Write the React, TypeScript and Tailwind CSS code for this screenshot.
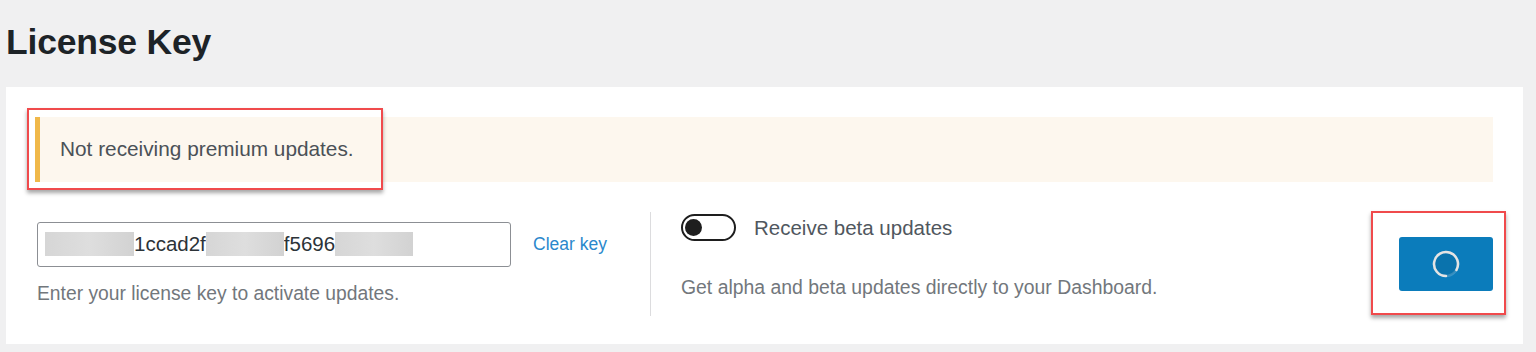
import React from "react";

const font = { fontFamily: '"Liberation Sans", Arial, sans-serif' };

function Redacted({ width }: { width: number }) {
  return (
    <span
      className="inline-block h-[24px] shrink-0 bg-gradient-to-r from-[#d6d6d6] via-[#dedede] to-[#d2d2d2] blur-[0.6px]"
      style={{ width }}
    />
  );
}

function Spinner() {
  return (
    <svg width="28" height="28" viewBox="0 0 28 28" fill="none">
      <circle cx="14" cy="14" r="12" fill="rgba(0,0,0,0.07)" />
      <circle cx="14" cy="14" r="12" stroke="rgba(255,255,255,0.18)" strokeWidth="2.5" />
      <path
        d="M14 26 A12 12 0 1 1 24.39 20"
        stroke="#e4e4e4"
        strokeWidth="2.5"
        strokeLinecap="round"
      />
    </svg>
  );
}

function Toggle() {
  return (
    <span className="flex h-[27px] w-[55px] shrink-0 items-center rounded-full border-2 border-[#1e1e1e] bg-white pl-[2px]">
      <span className="h-[17px] w-[17px] rounded-full bg-[#1e1e1e]" />
    </span>
  );
}

export default function App() {
  return (
    <div
      className="relative h-[352px] w-full overflow-hidden bg-[#f0f0f1] pl-[6px] pr-[13px]"
      style={font}
    >
      <h1 className="pt-[25px] text-[35.5px] font-bold leading-none tracking-[-0.2px] text-[#1d2327]">
        License Key
      </h1>

      <div className="mt-[26px] h-[257px] bg-white px-[29px] pr-[30px] pt-[30px]">
        {/* notice */}
        <div className="flex h-[65px] items-center border-l-[5px] border-[#f0b849] bg-[#fdf7ee] pl-[20px]">
          <p className="text-[20.8px] text-[#4b5157]">Not receiving premium updates.</p>
        </div>

        <div className="mt-[30px] flex items-start">
          {/* license key */}
          <div className="w-[615px] shrink-0 pl-[2px] pt-[10px]">
            <div className="flex items-center gap-[22px]">
              <div className="flex h-[45px] w-[474px] items-center rounded-[3px] border border-[#8c8f94] pl-[7px] text-[20.5px] text-[#2c3338]">
                <Redacted width={89} />
                <span>1ccad2f</span>
                <Redacted width={78} />
                <span>f5696</span>
                <Redacted width={78} />
              </div>
              <a className="text-[17.5px] text-[#2a88cc]">Clear key</a>
            </div>
            <p className="mt-[14px] text-[19.3px] leading-[25px] text-[#72777c]">
              Enter your license key to activate updates.
            </p>
          </div>

          <div className="h-[104px] w-px shrink-0 bg-[#dcdcde]" />

          {/* beta */}
          <div className="pl-[30px] pt-[1px]">
            <div className="flex items-center gap-[18px]">
              <Toggle />
              <span className="text-[20.5px] text-[#50575e]">Receive beta updates</span>
            </div>
            <p className="mt-[32px] text-[19.4px] leading-[25px] text-[#72777c]">
              Get alpha and beta updates directly to your Dashboard.
            </p>
          </div>

          <button
            type="button"
            className="ml-auto mt-[25px] flex h-[54px] w-[94px] items-center justify-center rounded-[3px] bg-[#0b7cbb]"
          >
            <Spinner />
          </button>
        </div>
      </div>

      {/* annotation boxes */}
      <div className="absolute left-[27px] top-[108px] h-[82px] w-[356px] border-2 border-[#f04a4c] shadow-[0_3px_4px_rgba(0,0,0,0.35)]" />
      <div className="absolute left-[1371px] top-[211px] h-[104px] w-[135px] border-2 border-[#f04a4c] shadow-[0_3px_4px_rgba(0,0,0,0.35)]" />
    </div>
  );
}
